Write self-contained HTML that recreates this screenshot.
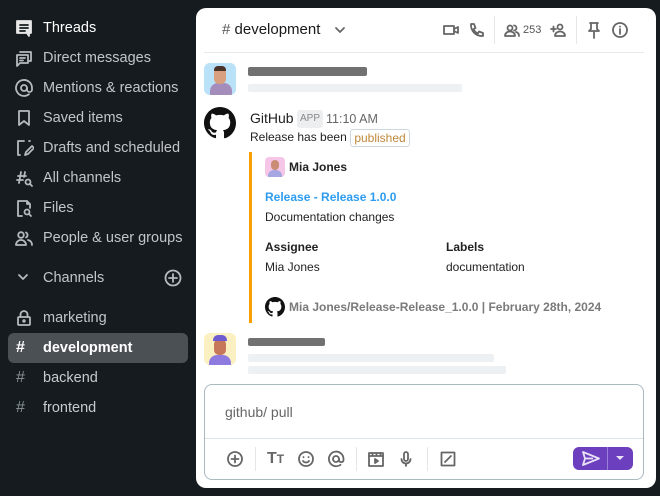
<!DOCTYPE html>
<html><head><meta charset="utf-8"><style>
*{margin:0;padding:0;box-sizing:border-box}
body{width:660px;height:496px;background:#151b1e;font-family:"Liberation Sans",sans-serif;position:relative;overflow:hidden}
.a{position:absolute}
.si{position:absolute;left:43px;font-size:14.5px;color:#c2c6ca;line-height:18px}
.ic{position:absolute;left:14px;width:20px;height:20px}
.ic svg,.hi svg{width:100%;height:100%;fill:none;stroke:#b5babe;stroke-width:1.8;stroke-linecap:round;stroke-linejoin:round}
.hi{position:absolute;width:18px;height:18px}
.hi svg{stroke:#666}
.t{position:absolute;font-size:12px;color:#222;line-height:14px;white-space:nowrap}
</style></head><body>
<!-- sidebar -->
<div class="ic" style="top:18px"><svg viewBox="0 0 20 20"><path d="M3 3h14v12H3z" fill="#e8e8e8" stroke="#e8e8e8"/><path d="M6 7h8M6 10h8M6 13h5" stroke="#151b1e"/><path d="M15 15v3l-2-3" stroke="#e8e8e8"/></svg></div>
<div class="si" style="top:19px;color:#fff">Threads</div>
<div class="ic" style="top:48px"><svg viewBox="0 0 20 20"><path d="M6 4h11v9h-2M3 7h11v8H6l-3 3z"/><path d="M6 10h5M6 12.5h3"/></svg></div>
<div class="si" style="top:49px">Direct messages</div>
<div class="ic" style="top:78px"><svg viewBox="0 0 20 20"><circle cx="10" cy="10" r="3"/><path d="M13 10v1.5a2.5 2.5 0 005 0V10a8 8 0 10-3 6.2"/></svg></div>
<div class="si" style="top:79px">Mentions &amp; reactions</div>
<div class="ic" style="top:108px"><svg viewBox="0 0 20 20"><path d="M5 3h10v14l-5-4-5 4z"/></svg></div>
<div class="si" style="top:109px">Saved items</div>
<div class="ic" style="top:138px"><svg viewBox="0 0 20 20"><path d="M10 3H4v14h2M11 17l1-3 6-6 2 2-6 6zM15 3h1"/></svg></div>
<div class="si" style="top:139px">Drafts and scheduled</div>
<div class="ic" style="top:168px"><svg viewBox="0 0 20 20"><path d="M4 8h8M3 12h6M7 4l-2 11M11 4l-1 5"/><circle cx="14" cy="14" r="2.5"/><path d="M16 16l2 2"/></svg></div>
<div class="si" style="top:169px">All channels</div>
<div class="ic" style="top:198px"><svg viewBox="0 0 20 20"><path d="M13 3H4v15h4M13 3l3 3v4M13 3v3h3"/><circle cx="13" cy="14" r="2.5"/><path d="M15 16l2 2"/></svg></div>
<div class="si" style="top:199px">Files</div>
<div class="ic" style="top:228px"><svg viewBox="0 0 20 20"><circle cx="7" cy="7" r="2.8"/><path d="M2 17c0-3 2.5-5 5-5s5 2 5 5zM12 4.5a2.8 2.8 0 010 5M14 12c2 .5 4 2 4 5"/></svg></div>
<div class="si" style="top:229px">People &amp; user groups</div>
<div class="ic" style="top:269px;left:15px;width:16px;height:16px"><svg viewBox="0 0 16 16"><path d="M4 6l4 4 4-4"/></svg></div>
<div class="si" style="top:269px">Channels</div>
<div class="ic" style="top:268px;left:163px"><svg viewBox="0 0 20 20"><circle cx="10" cy="10" r="7.5"/><path d="M10 6v8M6 10h8"/></svg></div>
<div class="ic" style="top:308px"><svg viewBox="0 0 20 20"><rect x="4" y="9" width="12" height="8" rx="1"/><path d="M6.5 9V6.5a3.5 3.5 0 017 0V9"/><circle cx="10" cy="13" r=".8"/></svg></div>
<div class="si" style="top:309px">marketing</div>
<div class="a" style="left:8px;top:333px;width:180px;height:30px;background:#4b5054;border-radius:6px"></div>
<div class="si" style="top:339px;left:16px;color:#fff;font-weight:bold;font-size:16px">#</div>
<div class="si" style="top:339px;color:#fff;font-weight:bold">development</div>
<div class="si" style="top:369px;left:16px;font-size:16px;color:#8a9296">#</div>
<div class="si" style="top:369px;color:#c8cbce">backend</div>
<div class="si" style="top:399px;left:16px;font-size:16px;color:#8a9296">#</div>
<div class="si" style="top:399px;color:#c8cbce">frontend</div>
<!-- main -->
<div class="a" style="left:196px;top:8px;width:460px;height:480px;background:#fff;border-radius:10px"></div>
<div class="a" style="left:222px;top:21px;font-size:15px;color:#1a1a1a"><span style="color:#555">#</span> <span>development</span></div>
<div class="hi" style="left:332px;top:22px;width:16px;height:16px"><svg viewBox="0 0 16 16"><path d="M4 6l4 4 4-4"/></svg></div>
<div class="hi" style="left:442px;top:21px"><svg viewBox="0 0 18 18"><rect x="2" y="5" width="10" height="8"/><path d="M12 8l4-2v6l-4-2"/></svg></div>
<div class="hi" style="left:468px;top:21px"><svg viewBox="0 0 18 18"><path d="M3 3h3l1.5 4-2 1.2a9 9 0 004.3 4.3l1.2-2 4 1.5v3c-7 .5-12.5-5-12-12z"/></svg></div>
<div class="a" style="left:494px;top:16px;width:1px;height:28px;background:#e5e8eb"></div>
<div class="hi" style="left:503px;top:21px"><svg viewBox="0 0 18 18"><circle cx="7" cy="7" r="2.5"/><path d="M2 15c0-3 2.5-4.5 5-4.5s5 1.5 5 4.5zM11 4.5a2.5 2.5 0 010 5M13 11c2 .5 3 2 3 4"/></svg></div>
<div class="a" style="left:523px;top:24px;font-size:11px;color:#555">253</div>
<div class="hi" style="left:549px;top:21px"><svg viewBox="0 0 18 18"><circle cx="11" cy="6" r="2.5"/><path d="M6 15c0-3 2.5-4.5 5-4.5s5 1.5 5 4.5zM2 8h5M4.5 5.5v5"/></svg></div>
<div class="a" style="left:576px;top:16px;width:1px;height:28px;background:#e5e8eb"></div>
<div class="hi" style="left:585px;top:21px"><svg viewBox="0 0 18 18"><path d="M5 2h8M6 2v6l-2 2h10l-2-2V2M9 10v7"/></svg></div>
<div class="hi" style="left:611px;top:21px"><svg viewBox="0 0 18 18"><circle cx="9" cy="9" r="7"/><path d="M9 8v5M9 5.5v.2"/></svg></div>
<div class="a" style="left:204px;top:52px;width:440px;height:1px;background:#e6eaed"></div>
<!-- msg1 -->
<div class="a" style="left:204px;top:63px;width:32px;height:32px;border-radius:6px;background:#b9e1f7;overflow:hidden"><div class="a" style="left:6px;top:20px;width:22px;height:14px;border-radius:8px 8px 0 0;background:#a58dbb"></div><div class="a" style="left:10px;top:4px;width:12px;height:17px;border-radius:5px;background:#d9a07f"></div><div class="a" style="left:10px;top:3px;width:12px;height:5px;border-radius:4px 4px 0 0;background:#4b3328"></div></div>
<div class="a" style="left:248px;top:67px;width:119px;height:9px;border-radius:2px;background:#717171"></div>
<div class="a" style="left:248px;top:84px;width:214px;height:8px;border-radius:2px;background:#eef1f4"></div>
<!-- github -->
<svg class="a" style="left:204px;top:107px" width="32" height="32" viewBox="0 0 16 16"><path fill="#111" d="M8 0C3.58 0 0 3.58 0 8c0 3.54 2.29 6.53 5.47 7.59.4.07.55-.17.55-.38v-1.33c-2.230.48-2.7-1.07-2.7-1.07-.36-.92-.89-1.170-.89-1.17-.73-.5.06-.49.06-.49.8.06 1.23.83 1.23.83.72 1.23 1.88.87 2.34.67.07-.52.28-.87.51-1.07-1.78-.2-3.65-.89-3.65-3.95 0-.87.31-1.59.82-2.15-.08-.2-.36-1.02.08-2.12 0 0 .67-.22 2.2.82a7.6 7.6 0 014 0c1.53-1.04 2.2-.82 2.2-.82.44 1.1.16 1.92.08 2.12.51.56.82 1.27.82 2.15 0 3.07-1.87 3.75-3.65 3.95.29.25.54.73.54 1.48v2.2c0 .21.15.46.55.38A8 8 0 0016 8c0-4.42-3.58-8-8-8z"/></svg>
<div class="t" style="left:250px;top:110px;font-size:14px;line-height:17px">GitHub</div>
<div class="a" style="left:297px;top:110px;width:26px;height:18px;background:#eceef0;border-radius:3px;font-size:10px;color:#888;text-align:center;line-height:18px">APP</div>
<div class="t" style="left:326px;top:112px;font-size:12.5px;color:#666">11:10 AM</div>
<div class="t" style="left:250px;top:130px">Release has been</div>
<div class="a" style="left:350px;top:129px;width:60px;height:18px;border:1px solid #cdd7df;border-radius:3px;font-size:12px;color:#c0873a;text-align:center;line-height:16px">published</div>
<div class="a" style="left:249px;top:152px;width:3px;height:171px;background:#f7a000"></div>
<div class="a" style="left:265px;top:157px;width:20px;height:20px;border-radius:4px;background:#f6c6e9"><div class="a" style="left:6px;top:3px;width:8px;height:10px;border-radius:4px;background:#c98d76"></div><div class="a" style="left:3px;top:13px;width:14px;height:7px;border-radius:6px 6px 0 0;background:#a5a7e2"></div></div>
<div class="t" style="left:289px;top:160px;font-weight:bold">Mia Jones</div>
<div class="t" style="left:265px;top:190px;font-weight:bold;color:#2d9cf0">Release - Release 1.0.0</div>
<div class="t" style="left:265px;top:210px">Documentation changes</div>
<div class="t" style="left:265px;top:240px;font-weight:bold">Assignee</div>
<div class="t" style="left:446px;top:240px;font-weight:bold">Labels</div>
<div class="t" style="left:265px;top:260px">Mia Jones</div>
<div class="t" style="left:446px;top:260px">documentation</div>
<svg class="a" style="left:265px;top:297px" width="20" height="20" viewBox="0 0 16 16"><path fill="#111" d="M8 0C3.58 0 0 3.58 0 8c0 3.54 2.29 6.53 5.47 7.59.4.07.55-.17.55-.38v-1.33c-2.23.48-2.7-1.07-2.7-1.07-.36-.92-.89-1.17-.89-1.17-.73-.5.06-.49.06-.49.8.06 1.23.83 1.23.83.72 1.23 1.88.87 2.34.67.07-.52.28-.87.51-1.07-1.78-.2-3.65-.89-3.65-3.95 0-.87.31-1.59.82-2.15-.08-.2-.36-1.02.08-2.12 0 0 .67-.22 2.2.82a7.6 7.6 0 014 0c1.53-1.04 2.2-.82 2.2-.82.44 1.1.16 1.92.08 2.12.51.56.82 1.27.82 2.15 0 3.07-1.87 3.75-3.65 3.95.29.25.54.73.54 1.48v2.2c0 .21.15.46.55.38A8 8 0 0016 8c0-4.42-3.58-8-8-8z"/></svg>
<div class="t" style="left:289px;top:300px;font-weight:bold;color:#7a7a7a">Mia Jones/Release-Release_1.0.0 | February 28th, 2024</div>
<!-- msg3 -->
<div class="a" style="left:204px;top:333px;width:32px;height:32px;border-radius:6px;background:#fbf0c0;overflow:hidden"><div class="a" style="left:5px;top:22px;width:22px;height:12px;border-radius:8px 8px 0 0;background:#8f7be0"></div><div class="a" style="left:10px;top:6px;width:12px;height:16px;border-radius:5px;background:#c8785a"></div><div class="a" style="left:9px;top:2px;width:14px;height:6px;border-radius:5px 5px 0 0;background:#6e5bd0"></div></div>
<div class="a" style="left:248px;top:338px;width:77px;height:8px;border-radius:2px;background:#717171"></div>
<div class="a" style="left:248px;top:354px;width:246px;height:8px;border-radius:2px;background:#eef1f4"></div>
<div class="a" style="left:248px;top:366px;width:258px;height:8px;border-radius:2px;background:#eef1f4"></div>
<!-- composer -->
<div class="a" style="left:204px;top:384px;width:440px;height:96px;border:1px solid #a9b9c2;border-radius:8px"></div>
<div class="a" style="left:225px;top:404px;font-size:14px;color:#666">github/ pull</div>
<div class="a" style="left:205px;top:438px;width:438px;height:1px;background:#dde3e7"></div>
<div class="hi" style="left:226px;top:450px"><svg viewBox="0 0 18 18"><circle cx="9" cy="9" r="7"/><path d="M9 5.5v7M5.5 9h7"/></svg></div>
<div class="a" style="left:255px;top:447px;width:1px;height:24px;background:#e3e7ea"></div>
<div class="a" style="left:267px;top:450px;font-size:16px;font-weight:bold;color:#666">T<span style="font-size:12px">T</span></div>
<div class="hi" style="left:297px;top:450px"><svg viewBox="0 0 18 18"><circle cx="9" cy="9" r="7"/><path d="M6 11c1.5 2 4.5 2 6 0M6.5 7v.2M11.5 7v.2"/></svg></div>
<div class="hi" style="left:327px;top:450px"><svg viewBox="0 0 18 18"><circle cx="9" cy="9" r="3"/><path d="M12 9v1.3a2.3 2.3 0 004.5 0V9A7.3 7.3 0 1013.5 14.8"/></svg></div>
<div class="a" style="left:356px;top:447px;width:1px;height:24px;background:#e3e7ea"></div>
<div class="hi" style="left:367px;top:450px"><svg viewBox="0 0 18 18"><rect x="2" y="3" width="14" height="13"/><path d="M2 6h14M5 3l1 3M9 3l1 3M13 3l1 3M8 9v4l3-2z"/></svg></div>
<div class="hi" style="left:397px;top:450px"><svg viewBox="0 0 18 18"><rect x="7" y="2" width="4" height="9" rx="2"/><path d="M4.5 9a4.5 4.5 0 009 0M9 13.5V16"/></svg></div>
<div class="a" style="left:427px;top:447px;width:1px;height:24px;background:#e3e7ea"></div>
<div class="hi" style="left:439px;top:450px"><svg viewBox="0 0 18 18"><rect x="2.5" y="2.5" width="13" height="13"/><path d="M6 12l6-6"/></svg></div>
<div class="a" style="left:573px;top:447px;width:60px;height:23px;background:#6b3fbe;border-radius:6px"></div>
<div class="a" style="left:607px;top:447px;width:1px;height:23px;background:#9a7fd6"></div>
<svg class="a" style="left:581px;top:450px" width="20" height="17" viewBox="0 0 20 17"><path d="M2 2l16 6.5L2 15l2-6.5z" fill="none" stroke="#e9e2f7" stroke-width="1.8" stroke-linejoin="round"/><path d="M4 8.5h8" stroke="#e9e2f7" stroke-width="1.8"/></svg>
<svg class="a" style="left:615px;top:455px" width="10" height="6"><path d="M1 1h8L5 5z" fill="#e9e2f7"/></svg>
</body></html>
